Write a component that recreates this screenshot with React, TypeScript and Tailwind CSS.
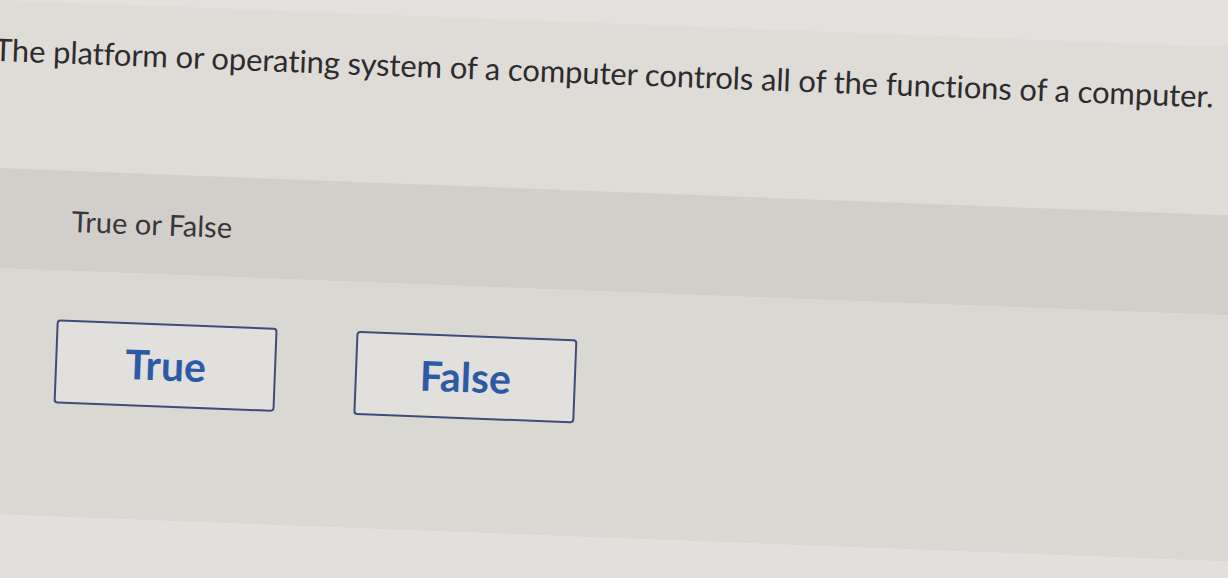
import { useState } from 'react';

type Choice = 'True' | 'False';

const choices: Choice[] = ['True', 'False'];

export default function App() {
  const [selected, setSelected] = useState<Choice | null>(null);

  return (
    <div className="h-[578px] w-full overflow-hidden bg-[#e3e1dd] font-['Lato',sans-serif]">
      {/* Whole sheet is tilted slightly, like a screen seen at an angle */}
      <div className="w-[1320px] h-[660px] origin-top-left rotate-[2.2deg] flex flex-col">
        {/* Question prompt */}
        <div className="h-[168px] bg-[#dfdcd7] pt-[31px] -ml-[4px]">
          <p className="text-[31px] leading-[36px] text-[#2e2b2f] tracking-[-0.12px] whitespace-nowrap">
            The platform or operating system of a computer controls all of the functions of a computer.
          </p>
        </div>

        {/* Answer type */}
        <div className="h-[100px] bg-[#d2cfca] flex items-center pl-[80px]">
          <span className="text-[29px] text-[#38363a]">True or False</span>
        </div>

        {/* Choices */}
        <div className="h-[246px] bg-[#dad8d3] pt-[49px] pl-[69px]">
          <div className="flex gap-[79px]">
            {choices.map((choice) => (
              <button
                key={choice}
                type="button"
                onClick={() => setSelected(choice)}
                className={`w-[221px] h-[84px] rounded-[4px] border-2 border-[#414b7a] flex items-center justify-center text-[41px] font-bold text-[#2d5aa5] cursor-pointer ${
                  selected === choice ? 'bg-[#d5dcec]' : 'bg-[#e2e0dc]'
                }`}
              >
                {choice}
              </button>
            ))}
          </div>
        </div>

        <div className="flex-1 bg-[#e2e0dc]" />
      </div>
    </div>
  );
}
